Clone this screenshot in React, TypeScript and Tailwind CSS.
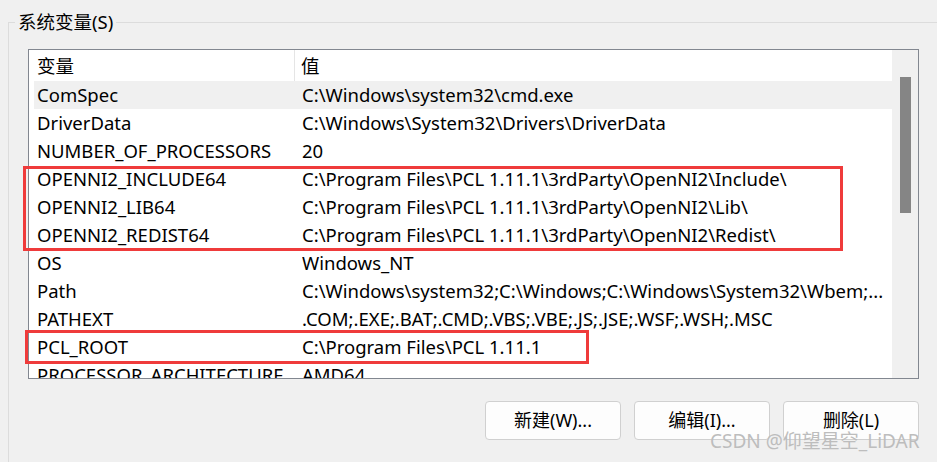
const rows: [string, string][] = [
  ['ComSpec', 'C:\\Windows\\system32\\cmd.exe'],
  ['DriverData', 'C:\\Windows\\System32\\Drivers\\DriverData'],
  ['NUMBER_OF_PROCESSORS', '20'],
  ['OPENNI2_INCLUDE64', 'C:\\Program Files\\PCL 1.11.1\\3rdParty\\OpenNI2\\Include\\'],
  ['OPENNI2_LIB64', 'C:\\Program Files\\PCL 1.11.1\\3rdParty\\OpenNI2\\Lib\\'],
  ['OPENNI2_REDIST64', 'C:\\Program Files\\PCL 1.11.1\\3rdParty\\OpenNI2\\Redist\\'],
  ['OS', 'Windows_NT'],
  ['Path', 'C:\\Windows\\system32;C:\\Windows;C:\\Windows\\System32\\Wbem;...'],
  ['PATHEXT', '.COM;.EXE;.BAT;.CMD;.VBS;.VBE;.JS;.JSE;.WSF;.WSH;.MSC'],
  ['PCL_ROOT', 'C:\\Program Files\\PCL 1.11.1'],
  ['PROCESSOR_ARCHITECTURE', 'AMD64'],
]

export default function App() {
  return (
    <div className="relative w-[937px] h-[462px] overflow-hidden bg-[#f0f0f0] text-[18.5px] text-black font-['Noto_Sans','Noto_Sans_CJK_SC',sans-serif]">
      {/* group box */}
      <div className="relative ml-[8px] mt-[22px] h-[460px] border-l border-t border-[#dcdcdc]">
        <div className="absolute left-[6px] top-[-14px] bg-[#f0f0f0] px-[3px] leading-[26px]">系统变量(S)</div>

        <div className="relative ml-[19px] mt-[26px] w-[891px]">
          <div className="flex h-[330px] border border-[#828790] bg-white overflow-hidden">
            <div className="flex-1 overflow-hidden">
              {/* header */}
              <div className="flex h-[31px] items-center">
                <div className="w-[266px] h-full pl-[8px] flex items-center border-r border-[#e5e5e5]">变量</div>
                <div className="pl-[6px]">值</div>
              </div>
              {rows.map(([name, value], i) => (
                <div
                  key={name}
                  className={`ml-[5px] grid grid-cols-[268px_1fr] h-[28px] items-center whitespace-nowrap ${i === 0 ? 'bg-[#f0f0f0]' : ''}`}
                >
                  <div className="pl-[3px] overflow-hidden">{name}</div>
                  <div className="overflow-hidden">{value}</div>
                </div>
              ))}
            </div>
            {/* scrollbar */}
            <div className="w-[26px] bg-[#f0f0f0] pl-[8px] pt-[27px]">
              <div className="w-[11px] h-[136px] bg-[#858585]" />
            </div>
          </div>

          {/* highlight marks */}
          <div className="absolute left-[-5px] top-[117px] w-[820px] h-[85px] border-[3px] border-[#ef3b3b]" />
          <div className="absolute left-[-3px] top-[281px] w-[564px] h-[34px] border-[3px] border-[#ef3b3b]" />
        </div>

        <div className="flex justify-end gap-[13px] w-[910px] mt-[22px]">
          {['新建(W)...', '编辑(I)...', '删除(L)'].map((label) => (
            <button
              key={label}
              className="w-[136px] h-[39px] rounded-[4px] border border-[#d0d0d0] bg-[#fdfdfd] text-[18px]"
            >
              {label}
            </button>
          ))}
        </div>
      </div>

      <div className="absolute left-[710px] top-[429px] text-[19px] leading-[24px] text-[#bdbdbd] whitespace-nowrap">
        CSDN @仰望星空_LiDAR
      </div>
    </div>
  )
}
